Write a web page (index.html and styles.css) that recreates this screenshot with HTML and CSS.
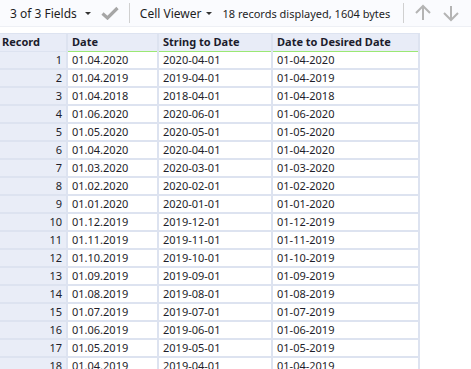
FILE: index.html
```html
<!DOCTYPE html>
<html lang="en">

<head>
    <meta charset="UTF-8">
    <title>Results - Cell Viewer</title>
    <link rel="stylesheet" href="styles.css">
</head>

<body>
    <div class="toolbar">
        <span class="tool-label">3 of 3 Fields</span>
        <span class="caret"></span>
        <svg class="check" width="18" height="14" viewBox="0 0 18 14">
            <path d="M1.5 7.5 L6.5 12 L16.5 2" fill="none" stroke="#a6a6a6" stroke-width="3.2" />
        </svg>
        <span class="sep"></span>
        <span class="tool-label">Cell Viewer</span>
        <span class="caret caret-near"></span>
        <span class="tool-info">18 records displayed, 1604 bytes</span>
        <span class="sep sep-wide"></span>
        <svg class="arrow" width="18" height="18" viewBox="0 0 18 18">
            <path d="M9 16 V2 M2 9 L9 2 L16 9" fill="none" stroke="#b4b4b4" stroke-width="2" />
        </svg>
        <svg class="arrow" width="18" height="18" viewBox="0 0 18 18">
            <path d="M9 2 V16 M2 9 L9 16 L16 9" fill="none" stroke="#b4b4b4" stroke-width="2" />
        </svg>
    </div>

    <div class="grid" id="grid">
        <div class="head rec-head">Record</div>
        <div class="head">Date</div>
        <div class="head">String to Date</div>
        <div class="head">Date to Desired Date</div>
    </div>

    <script>
        // 数据行
        var rows = [
            ["01.04.2020", "2020-04-01", "01-04-2020"],
            ["01.04.2019", "2019-04-01", "01-04-2019"],
            ["01.04.2018", "2018-04-01", "01-04-2018"],
            ["01.06.2020", "2020-06-01", "01-06-2020"],
            ["01.05.2020", "2020-05-01", "01-05-2020"],
            ["01.04.2020", "2020-04-01", "01-04-2020"],
            ["01.03.2020", "2020-03-01", "01-03-2020"],
            ["01.02.2020", "2020-02-01", "01-02-2020"],
            ["01.01.2020", "2020-01-01", "01-01-2020"],
            ["01.12.2019", "2019-12-01", "01-12-2019"],
            ["01.11.2019", "2019-11-01", "01-11-2019"],
            ["01.10.2019", "2019-10-01", "01-10-2019"],
            ["01.09.2019", "2019-09-01", "01-09-2019"],
            ["01.08.2019", "2019-08-01", "01-08-2019"],
            ["01.07.2019", "2019-07-01", "01-07-2019"],
            ["01.06.2019", "2019-06-01", "01-06-2019"],
            ["01.05.2019", "2019-05-01", "01-05-2019"],
            ["01.04.2019", "2019-04-01", "01-04-2019"]
        ];

        var grid = document.getElementById("grid");
        rows.forEach(function (r, i) {
            var num = document.createElement("div");
            num.className = "cell rec";
            num.textContent = i + 1;
            grid.appendChild(num);
            r.forEach(function (v) {
                var c = document.createElement("div");
                c.className = "cell";
                c.textContent = v;
                grid.appendChild(c);
            });
        });
    </script>
</body>

</html>
```

FILE: styles.css
```css
body {
    margin: 0;
    padding: 0;
    background: #ffffff;
    font-family: 'Noto Sans', 'Open Sans', sans-serif;
    font-size: 11px;
    color: #1e1e2a;
    overflow: hidden;
}

/* Toolbar */
.toolbar {
    display: flex;
    align-items: center;
    height: 26px;
    padding-left: 10px;
    background: #fafbfe;
    border-bottom: 1px solid #eef0f5;
    margin-bottom: 6px;
    white-space: nowrap;
}

.toolbar > * {
    flex-shrink: 0;
}

.tool-label {
    font-size: 12px;
    color: #1e1e1e;
}

.caret {
    width: 0;
    height: 0;
    border-left: 3px solid transparent;
    border-right: 3px solid transparent;
    border-top: 3px solid #333;
    margin: 1px 8px 0 8px;
}

.caret-near {
    margin-left: 5px;
}

.check {
    margin-left: 2px;
}

.sep {
    width: 1px;
    height: 20px;
    background: #d0d0d0;
    margin: 0 10px 0 10px;
}

.sep-wide {
    margin: 0 10px 0 13px;
}

.tool-info {
    margin-left: 2px;
    font-size: 11px;
    color: #1e1e1e;
}

.arrow {
    margin-right: 10px;
}

/* Grid */
.grid {
    display: grid;
    grid-template-columns: 66px 89px 112px 145px;
    grid-auto-rows: 16px;
    gap: 2px;
    width: 418px;
    padding: 1px 2px 2px 0;
    background: #dde3f0;
}

.head {
    background: #e8ecf7;
    font-weight: bold;
    padding-left: 4px;
    line-height: 15px;
    height: 17px;
    border-bottom: 2px solid #9be874;
    color: #1c1c2c;
}

.rec-head {
    border-bottom: none;
    padding-left: 2px;
}

.cell {
    background: #ffffff;
    padding-left: 4px;
    line-height: 16px;
    white-space: nowrap;
}

.rec {
    background: #e9edf7;
    text-align: right;
    padding-right: 4px;
}
```
